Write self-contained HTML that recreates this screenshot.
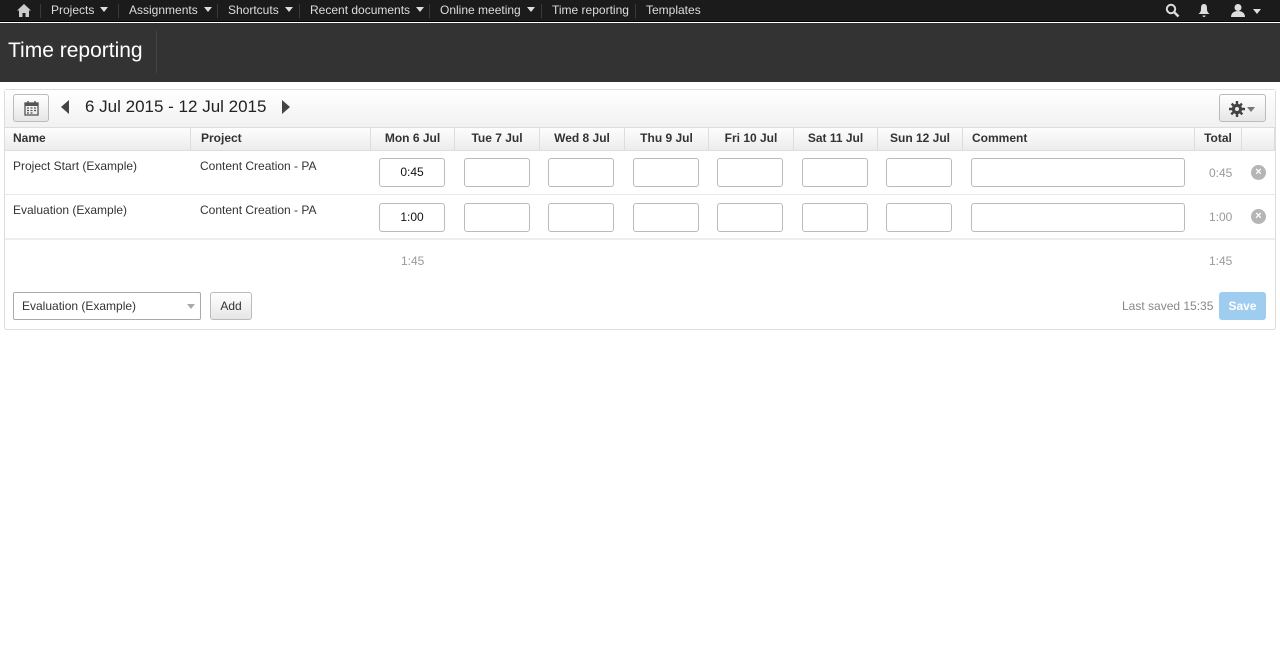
<!DOCTYPE html>
<html><head><meta charset="utf-8"><style>
*{box-sizing:border-box;margin:0;padding:0}
body{width:1280px;height:662px;background:#fff;font-family:"Liberation Sans",Arial,sans-serif;font-size:12px;color:#333;position:relative;overflow:hidden}
.a{position:absolute}
#nav{left:0;top:0;width:1280px;height:22px;background:#1b1b1b;border-bottom:1px solid #000}
.ni{position:absolute;top:0;height:22px;line-height:20px;color:#ddd;font-size:12px;white-space:nowrap}
.sep{position:absolute;top:4px;width:1px;height:14px;background:#3a3a3a}
.car{display:inline-block;width:0;height:0;border-left:4px solid transparent;border-right:4px solid transparent;border-top:5px solid #ddd;margin-left:6px;vertical-align:2px}
#hdr{left:0;top:23px;width:1280px;height:59px;background:#333}
#panel{left:4px;top:89px;width:1272px;height:241px;border:1px solid #ddd;border-radius:3px}
.th{position:absolute;top:127px;height:24px;line-height:23px;font-weight:bold;font-size:12px;color:#333;border-right:1px solid #ddd}
.inp{position:absolute;height:29px;border:1px solid #bbb;border-radius:3px;background:#fff;text-align:center;line-height:27px;color:#111}
.row{position:absolute;left:5px;width:1270px;height:1px;background:#e8e8e8}
.x{position:absolute;width:15px;height:15px;border-radius:50%;background:#b5b5b5;color:#fff;font-size:11px;font-weight:bold;text-align:center;line-height:15px}
</style></head><body>
<div id="nav" class="a">
<svg class="a" style="left:17px;top:4px" width="14" height="13" viewBox="0 0 14 13"><path d="M7 0L0 6.5h2V13h3.5V9h3v4H12V6.5h2z" fill="#ccc"/></svg>
<div class="sep" style="left:40px"></div>
<div class="ni" style="left:51px">Projects<span class="car"></span></div>
<div class="sep" style="left:118px"></div>
<div class="ni" style="left:129px">Assignments<span class="car"></span></div>
<div class="sep" style="left:217px"></div>
<div class="ni" style="left:228px">Shortcuts<span class="car"></span></div>
<div class="sep" style="left:299px"></div>
<div class="ni" style="left:310px">Recent documents<span class="car"></span></div>
<div class="sep" style="left:429px"></div>
<div class="ni" style="left:440px">Online meeting<span class="car"></span></div>
<div class="sep" style="left:541px"></div>
<div class="ni" style="left:552px">Time reporting</div>
<div class="sep" style="left:635px"></div>
<div class="ni" style="left:646px">Templates</div>
<svg class="a" style="left:1165px;top:3px" width="15" height="15" viewBox="0 0 15 15"><circle cx="6" cy="6" r="4.2" stroke="#ddd" stroke-width="2" fill="none"/><path d="M9 9l4.5 4.5" stroke="#ddd" stroke-width="2.5"/></svg>
<svg class="a" style="left:1198px;top:3px" width="12" height="15" viewBox="0 0 12 15"><path d="M6 1C3 1 3 4 3 6c0 3-1.5 4-2.5 5h11C10.5 10 9 9 9 6c0-2 0-5-3-5zM4.5 12.5h3a1.5 1.5 0 01-3 0z" fill="#ddd"/></svg>
<svg class="a" style="left:1231px;top:3px" width="14" height="15" viewBox="0 0 14 15"><circle cx="7" cy="4.5" r="3.5" fill="#ddd"/><path d="M0 14c0-4 3-6 7-6s7 2 7 6z" fill="#ddd"/></svg>
<span class="car a" style="left:1247px;top:9px"></span>
</div>
<div id="hdr" class="a">
<div class="a" style="left:8px;top:16px;font-size:21px;color:#fff">Time reporting</div>
<div class="a" style="left:156px;top:8px;width:1px;height:42px;background:#444"></div>
</div>
<div id="panel" class="a"></div>
<div class="a" style="left:5px;top:90px;width:1270px;height:37px;background:linear-gradient(#fff,#f1f1f1)"></div>
<div class="a" style="left:13px;top:94px;width:36px;height:28px;border:1px solid #bbb;border-radius:3px;background:linear-gradient(#fff,#e6e6e6)">
<svg class="a" style="left:10px;top:6px" width="15" height="15" viewBox="0 0 15 15"><rect x="1" y="2" width="13" height="12" fill="none" stroke="#555" stroke-width="1.3"/><rect x="1" y="2" width="13" height="3" fill="#555"/><path d="M4 0v3M11 0v3" stroke="#555" stroke-width="1.5"/><path d="M3 7h2M6.5 7h2M10 7h2M3 9.5h2M6.5 9.5h2M10 9.5h2M3 12h2M6.5 12h2" stroke="#555" stroke-width="1.2"/></svg></div>
<svg class="a" style="left:61px;top:100px" width="8" height="14"><path d="M8 0v14L0 7z" fill="#444"/></svg>
<div class="a" style="left:85px;top:97px;font-size:17px;color:#222">6 Jul 2015 - 12 Jul 2015</div>
<svg class="a" style="left:282px;top:100px" width="8" height="14"><path d="M0 0v14L8 7z" fill="#444"/></svg>
<div class="a" style="left:1219px;top:94px;width:47px;height:28px;border:1px solid #bbb;border-radius:3px;background:linear-gradient(#fff,#e6e6e6)">
<svg class="a" style="left:9px;top:6px" width="16" height="16" viewBox="0 0 16 16"><g fill="#444"><circle cx="8" cy="8" r="5.2"/><path d="M6.8 0h2.4v3H6.8zM6.8 13h2.4v3H6.8zM0 6.8h3v2.4H0zM13 6.8h3v2.4h-3zM1.8 3.5l1.7-1.7 2.1 2.1-1.7 1.7zM10.4 12.1l1.7-1.7 2.1 2.1-1.7 1.7zM12.1 1.8l1.7 1.7-2.1 2.1-1.7-1.7zM3.5 10.4l1.7 1.7-2.1 2.1-1.7-1.7z"/></g><circle cx="8" cy="8" r="2" fill="#eee"/></svg>
<span class="car a" style="left:27px;top:12px;border-top-color:#777;margin:0"></span></div>
<div class="a" style="left:5px;top:127px;width:1270px;height:24px;background:linear-gradient(#fdfdfd,#ececec);border-top:1px solid #ddd;border-bottom:1px solid #ddd"></div>
<div class="th" style="left:5px;width:186px;padding-left:8px">Name</div>
<div class="th" style="left:191px;width:180px;padding-left:10px">Project</div>
<div class="th" style="left:371px;width:84px;text-align:center">Mon 6 Jul</div>
<div class="th" style="left:455px;width:85px;text-align:center">Tue 7 Jul</div>
<div class="th" style="left:540px;width:85px;text-align:center">Wed 8 Jul</div>
<div class="th" style="left:625px;width:84px;text-align:center">Thu 9 Jul</div>
<div class="th" style="left:709px;width:85px;text-align:center">Fri 10 Jul</div>
<div class="th" style="left:794px;width:84px;text-align:center">Sat 11 Jul</div>
<div class="th" style="left:878px;width:85px;text-align:center">Sun 12 Jul</div>
<div class="th" style="left:963px;width:232px;padding-left:9px">Comment</div>
<div class="th" style="left:1195px;width:47px;text-align:center">Total</div>
<div class="th" style="left:1242px;width:33px"></div>

<div class="a" style="left:13px;top:159px">Project Start (Example)</div>
<div class="a" style="left:200px;top:159px">Content Creation - PA</div>
<div class="a" style="left:13px;top:203px">Evaluation (Example)</div>
<div class="a" style="left:200px;top:203px">Content Creation - PA</div>
<div class="row" style="top:194px"></div>
<div class="row" style="top:238px;height:2px;background:#eee"></div>

<div class="inp" style="left:379px;top:158px;width:66px">0:45</div>
<div class="inp" style="left:464px;top:158px;width:66px"></div>
<div class="inp" style="left:548px;top:158px;width:66px"></div>
<div class="inp" style="left:633px;top:158px;width:66px"></div>
<div class="inp" style="left:717px;top:158px;width:66px"></div>
<div class="inp" style="left:802px;top:158px;width:66px"></div>
<div class="inp" style="left:886px;top:158px;width:66px"></div>
<div class="inp" style="left:971px;top:158px;width:214px"></div>
<div class="a" style="left:1209px;top:166px;color:#999">0:45</div>
<div class="x" style="left:1251px;top:165px">×</div>

<div class="inp" style="left:379px;top:203px;width:66px">1:00</div>
<div class="inp" style="left:464px;top:203px;width:66px"></div>
<div class="inp" style="left:548px;top:203px;width:66px"></div>
<div class="inp" style="left:633px;top:203px;width:66px"></div>
<div class="inp" style="left:717px;top:203px;width:66px"></div>
<div class="inp" style="left:802px;top:203px;width:66px"></div>
<div class="inp" style="left:886px;top:203px;width:66px"></div>
<div class="inp" style="left:971px;top:203px;width:214px"></div>
<div class="a" style="left:1209px;top:210px;color:#999">1:00</div>
<div class="x" style="left:1251px;top:209px">×</div>

<div class="a" style="left:401px;top:254px;color:#999">1:45</div>
<div class="a" style="left:1209px;top:254px;color:#999">1:45</div>

<div class="a" style="left:13px;top:292px;width:188px;height:28px;border:1px solid #aaa;border-radius:2px;background:#fff;line-height:26px;padding-left:8px">Evaluation (Example)<span class="car a" style="left:173px;top:11px;border-top-color:#aaa;margin:0"></span></div>
<div class="a" style="left:210px;top:292px;width:42px;height:28px;border:1px solid #bbb;border-radius:3px;background:linear-gradient(#fff,#e6e6e6);text-align:center;line-height:26px">Add</div>
<div class="a" style="left:1122px;top:299px;color:#888">Last saved 15:35</div>
<div class="a" style="left:1219px;top:292px;width:47px;height:28px;border-radius:3px;background:#9fcdef;color:#fff;text-align:center;line-height:28px;font-weight:bold">Save</div>
</body></html>
